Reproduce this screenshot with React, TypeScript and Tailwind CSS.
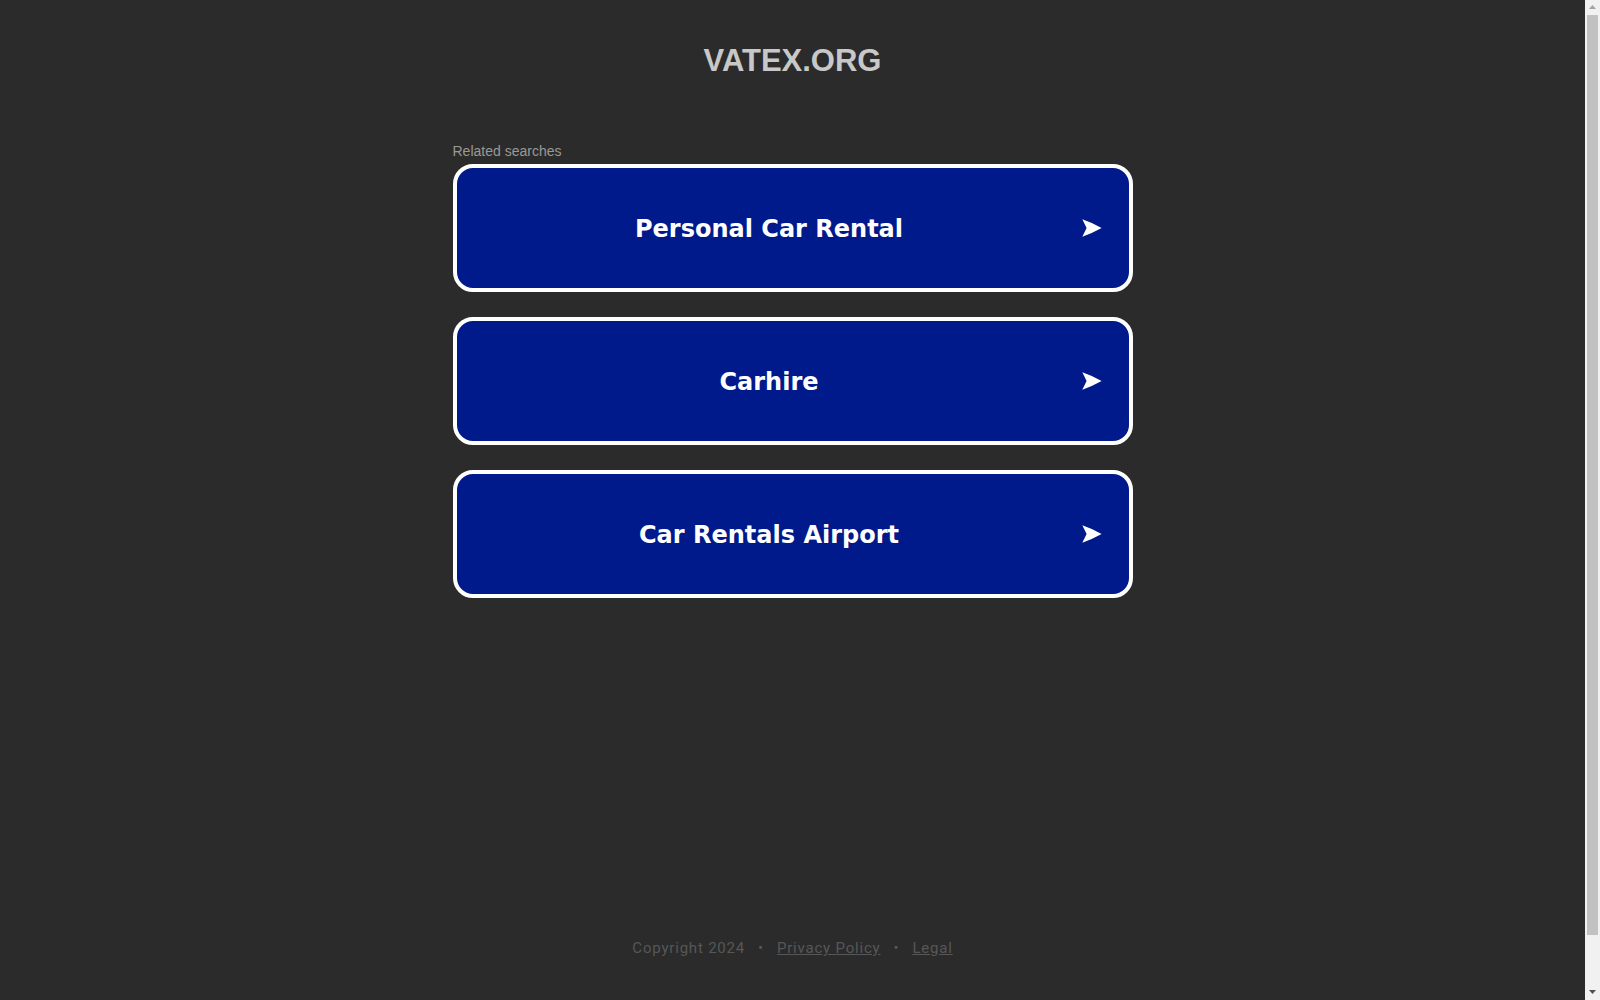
const searches = ["Personal Car Rental", "Carhire", "Car Rentals Airport"]

function ArrowHead() {
  return (
    <svg width="20" height="18" viewBox="0 0 20 18" className="mr-[27px] shrink-0" aria-hidden="true">
      <path d="M0.3 0.3 Q10 3.6 19.6 9 Q10 14.4 0.3 17.7 L4.6 9 Z" fill="#ffffff" />
    </svg>
  )
}

function SearchLink({ label }: { label: string }) {
  return (
    <a
      href="#"
      className="flex h-[128px] items-center rounded-[20px] border-4 border-white bg-[#011a8b] text-white no-underline"
    >
      <span className="flex-1 pt-[2px] text-center font-['DejaVu_Sans',Verdana,sans-serif] text-[24px] font-bold leading-[28px]">
        {label}
      </span>
      <ArrowHead />
    </a>
  )
}

function Scrollbar() {
  return (
    <aside className="flex w-[15px] shrink-0 flex-col bg-[#f1f1f1]">
      <div className="flex h-[15px] items-start justify-center pt-[5px]">
        <svg width="7" height="4" viewBox="0 0 7 4">
          <path d="M3.5 0 L7 4 L0 4 Z" fill="#a3a3a3" />
        </svg>
      </div>
      <div className="mx-auto h-[920px] w-[11px] bg-[#c1c1c1]" />
      <div className="flex flex-1 items-end justify-center pb-[6px]">
        <svg width="7" height="4" viewBox="0 0 7 4">
          <path d="M0 0 L7 0 L3.5 4 Z" fill="#505050" />
        </svg>
      </div>
    </aside>
  )
}

export default function App() {
  return (
    <div className="flex h-[1000px] overflow-hidden bg-[#2b2b2b] font-['Liberation_Sans',Arial,sans-serif]">
      <main className="flex min-w-0 flex-1 flex-col">
        <h1 className="pt-[43px] text-center text-[31px] font-bold leading-[35px] text-[#c8c8c8]">VATEX.ORG</h1>

        <div className="mx-auto mt-[65px] w-[680px]">
          <p className="text-[14px] leading-[16px] text-[#999999]">Related searches</p>
          <div className="mt-[5px] flex flex-col gap-[25px]">
            {searches.map((label) => (
              <SearchLink key={label} label={label} />
            ))}
          </div>
        </div>

        <footer className="mt-[341px] flex items-center justify-center font-['Roboto',sans-serif] text-[15px] leading-[18px] tracking-[0.8px] text-[#575757]">
          <span>Copyright 2024</span>
          <span className="mx-[13px]">•</span>
          <a href="#" className="underline">
            Privacy Policy
          </a>
          <span className="mx-[13px]">•</span>
          <a href="#" className="underline">
            Legal
          </a>
        </footer>
      </main>
      <Scrollbar />
    </div>
  )
}
